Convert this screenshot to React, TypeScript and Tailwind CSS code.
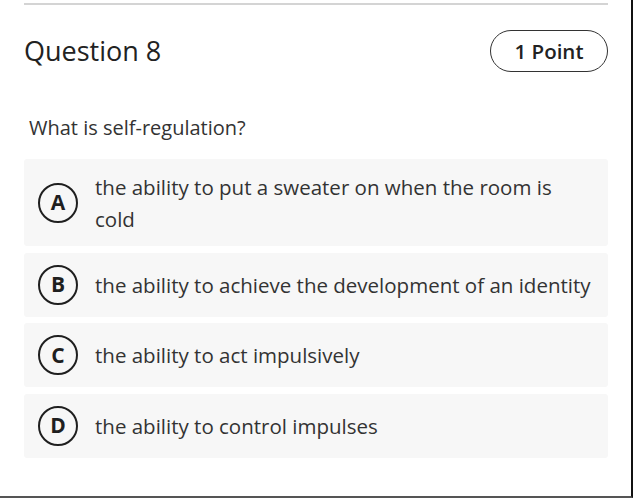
import React from 'react';

const options = [
  { letter: 'A', text: 'the ability to put a sweater on when the room is cold' },
  { letter: 'B', text: 'the ability to achieve the development of an identity' },
  { letter: 'C', text: 'the ability to act impulsively' },
  { letter: 'D', text: 'the ability to control impulses' },
];

const Option: React.FC<{ letter: string; text: string }> = ({ letter, text }) => (
  <div className="flex items-center min-h-[64px] py-[11.5px] px-[14px] bg-[#f7f7f7] rounded-[3px]">
    <span className="w-[40px] h-[40px] shrink-0 rounded-full border-[2.5px] border-[#1f1f1f] flex items-center justify-center text-[21px] font-bold text-[#1f1f1f] leading-none">
      {letter}
    </span>
    <p className="ml-[17px] text-[20.5px] leading-[32px] text-[#333]">{text}</p>
  </div>
);

export default function App() {
  return (
    <div
      className="w-[633px] h-[498px] bg-white border-r-2 border-b-2 border-r-[#111] border-b-[#555] overflow-hidden"
      style={{ fontFamily: '"Open Sans", sans-serif' }}
    >
      <div className="pl-6 pr-[23px] pt-[3px]">
        <div className="h-[2px] bg-[#d4d4d4]" />

        <div className="flex items-center justify-between mt-[25px]">
          <h2 className="text-[27px] font-normal text-[#222] leading-[42px]">Question 8</h2>
          <div className="w-[118px] h-[42px] rounded-full border-[1.5px] border-[#333] flex items-center justify-center text-[20.5px] font-semibold text-[#222]">
            1 Point
          </div>
        </div>

        <p className="mt-[44px] ml-[5px] text-[20px] leading-[24px] text-[#333]">What is self-regulation?</p>

        <div className="mt-[19px] flex flex-col gap-[6.5px]">
          {options.map((o) => (
            <Option key={o.letter} letter={o.letter} text={o.text} />
          ))}
        </div>
      </div>
    </div>
  );
}
